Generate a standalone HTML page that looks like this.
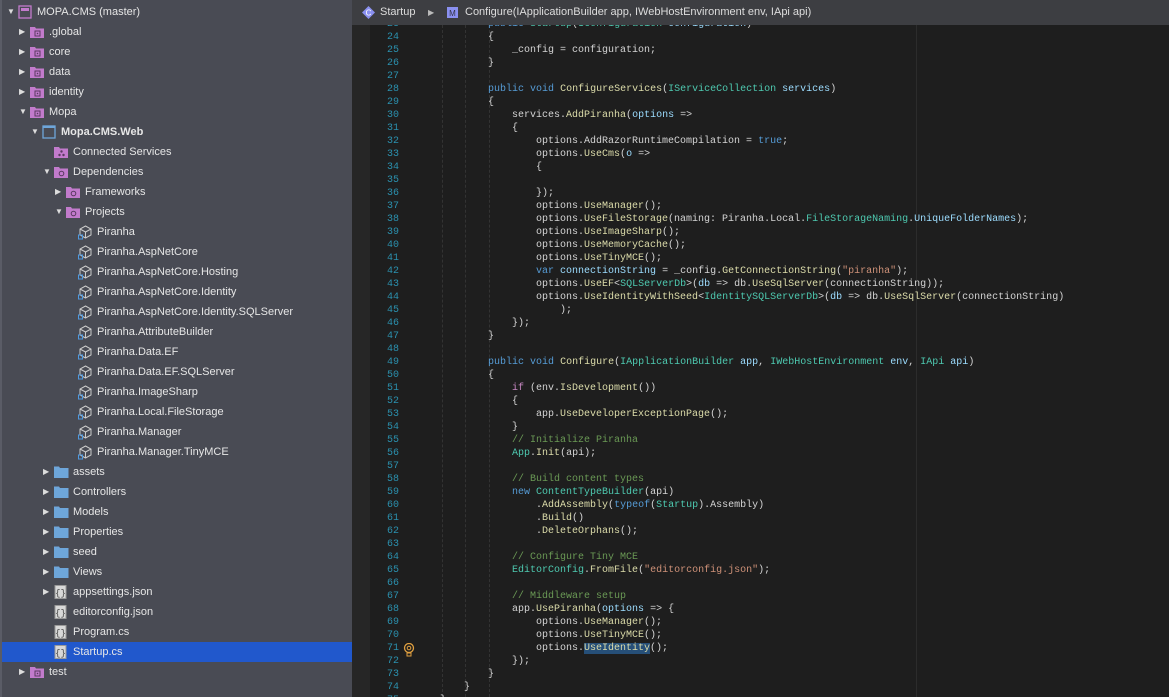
<!DOCTYPE html>
<html><head><meta charset="utf-8"><style>
*{margin:0;padding:0;box-sizing:border-box}
body{width:1169px;height:697px;overflow:hidden;background:#1e1e1e;position:relative;font-family:"Liberation Sans",sans-serif}
#side{position:absolute;left:0;top:0;width:352px;height:697px;background:#494b54;border-left:2px solid #5a5c66}
.row{position:absolute;left:0;width:352px;height:20px;color:#e6e6e6;font-size:11px;line-height:20px}
.row .t{position:absolute;top:0;white-space:nowrap}
.arr{position:absolute;top:0;font-size:8px;color:#ddd}
.ic{position:absolute;top:3px}
.sel{background:#2158cc}
#gut{position:absolute;left:352px;top:0;width:18px;height:697px;background:#262626}
#hdr{position:absolute;left:352px;top:0;width:817px;height:25px;background:#3d3e42;color:#ddd;font-size:11px;line-height:25px;z-index:3}
#code{position:absolute;left:370px;top:0;width:799px;height:697px;overflow:hidden}
.ln{position:absolute;left:0;width:29px;text-align:right;color:#2b91af;font:10px/13px "Liberation Mono",monospace}
.cl{position:absolute;left:70px;white-space:pre;color:#d4d4d4;font:10px/13px "Liberation Mono",monospace}
.k{color:#569cd6}.m{color:#dcdcaa}.y{color:#4ec9b0}.p{color:#9cdcfe}.s{color:#ce9178}.c{color:#6a9955}.f{color:#c586c0}
.g{position:absolute;top:0;height:697px;border-left:1px dashed #333}
</style></head><body>
<div id="side"></div>
<div id="gut"></div>
<div id="hdr">
<svg style="position:absolute;left:10px;top:6px" width="13" height="13"><path d="M6.5 0L13 6.5 6.5 13 0 6.5Z" fill="#8a90f0"/><text x="6.5" y="9.5" font-size="8" text-anchor="middle" fill="#fff" font-family="Liberation Sans">C</text></svg>
<span style="position:absolute;left:28px">Startup</span>
<span style="position:absolute;left:76px;font-size:8px;color:#bbb">▶</span>
<svg style="position:absolute;left:95px;top:7px" width="11" height="11"><rect width="11" height="11" fill="#8a90f0"/><text x="5.5" y="9" font-size="8" text-anchor="middle" fill="#334" font-family="Liberation Sans">M</text></svg>
<span style="position:absolute;left:113px">Configure(IApplicationBuilder app, IWebHostEnvironment env, IApi api)</span>
</div>
<div id="code">
<div class="g" style="left:72px"></div><div class="g" style="left:95px"></div><div class="g" style="left:119px"></div>
<div style="position:absolute;left:546px;top:0;width:1px;height:697px;background:#2c2c2c"></div>
<div id="lines"></div>
</div>
<script>
const L=[
[23,'        <span class="k">public</span> <span class="y">Startup</span>(<span class="y">IConfiguration</span> <span class="p">configuration</span>)'],
[24,'        {'],[25,'            _config = configuration;'],[26,'        }'],[27,''],
[28,'        <span class="k">public</span> <span class="k">void</span> <span class="m">ConfigureServices</span>(<span class="y">IServiceCollection</span> <span class="p">services</span>)'],
[29,'        {'],[30,'            services.<span class="m">AddPiranha</span>(<span class="p">options</span> =>'],[31,'            {'],
[32,'                options.AddRazorRuntimeCompilation = <span class="k">true</span>;'],
[33,'                options.<span class="m">UseCms</span>(<span class="p">o</span> =>'],[34,'                {'],[35,''],[36,'                });'],
[37,'                options.<span class="m">UseManager</span>();'],
[38,'                options.<span class="m">UseFileStorage</span>(naming: Piranha.Local.<span class="y">FileStorageNaming</span>.<span class="p">UniqueFolderNames</span>);'],
[39,'                options.<span class="m">UseImageSharp</span>();'],[40,'                options.<span class="m">UseMemoryCache</span>();'],[41,'                options.<span class="m">UseTinyMCE</span>();'],
[42,'                <span class="k">var</span> <span class="p">connectionString</span> = _config.<span class="m">GetConnectionString</span>(<span class="s">"piranha"</span>);'],
[43,'                options.<span class="m">UseEF</span>&lt;<span class="y">SQLServerDb</span>&gt;(<span class="p">db</span> => db.<span class="m">UseSqlServer</span>(connectionString));'],
[44,'                options.<span class="m">UseIdentityWithSeed</span>&lt;<span class="y">IdentitySQLServerDb</span>&gt;(<span class="p">db</span> => db.<span class="m">UseSqlServer</span>(connectionString)'],
[45,'                    );'],[46,'            });'],[47,'        }'],[48,''],
[49,'        <span class="k">public</span> <span class="k">void</span> <span class="m">Configure</span>(<span class="y">IApplicationBuilder</span> <span class="p">app</span>, <span class="y">IWebHostEnvironment</span> <span class="p">env</span>, <span class="y">IApi</span> <span class="p">api</span>)'],
[50,'        {'],[51,'            <span class="f">if</span> (env.<span class="m">IsDevelopment</span>())'],[52,'            {'],
[53,'                app.<span class="m">UseDeveloperExceptionPage</span>();'],[54,'            }'],
[55,'            <span class="c">// Initialize Piranha</span>'],[56,'            <span class="y">App</span>.<span class="m">Init</span>(api);'],[57,''],
[58,'            <span class="c">// Build content types</span>'],[59,'            <span class="k">new</span> <span class="y">ContentTypeBuilder</span>(api)'],
[60,'                .<span class="m">AddAssembly</span>(<span class="k">typeof</span>(<span class="y">Startup</span>).Assembly)'],[61,'                .<span class="m">Build</span>()'],[62,'                .<span class="m">DeleteOrphans</span>();'],[63,''],
[64,'            <span class="c">// Configure Tiny MCE</span>'],[65,'            <span class="y">EditorConfig</span>.<span class="m">FromFile</span>(<span class="s">"editorconfig.json"</span>);'],[66,''],
[67,'            <span class="c">// Middleware setup</span>'],[68,'            app.<span class="m">UsePiranha</span>(<span class="p">options</span> => {'],
[69,'                options.<span class="m">UseManager</span>();'],[70,'                options.<span class="m">UseTinyMCE</span>();'],
[71,'                options.<span class="m" style="background:#264f78">UseIdentity</span>();'],[72,'            });'],[73,'        }'],[74,'    }'],[75,'}']];
let h='';for(const [n,c] of L){const y=31+(n-24)*13;h+=`<div class="ln" style="top:${y}px">${n}</div><div class="cl" style="top:${y}px">${c}</div>`;}
h+='<svg style="position:absolute;left:33px;top:643px" width="12" height="14"><circle cx="6" cy="5" r="4.5" fill="none" stroke="#e0a040" stroke-width="1.3"/><circle cx="6" cy="5" r="1.8" fill="none" stroke="#e0a040"/><rect x="4" y="10" width="4" height="3" fill="none" stroke="#e0a040"/></svg>';
document.getElementById('lines').innerHTML=h;
const pf='<svg class="ic" width="15" height="14"><path d="M0 2h5l1 1.5h8V13H0z" fill="#c27bcc"/><rect x="5" y="6" width="5" height="5" fill="none" stroke="#5a3a60"/><rect x="6.8" y="7.8" width="1.4" height="1.4" fill="#5a3a60"/></svg>';
const pd='<svg class="ic" width="15" height="14"><path d="M0 2h5l1 1.5h8V13H0z" fill="#c27bcc"/><circle cx="7.5" cy="8.5" r="2.3" fill="none" stroke="#5a3a60"/></svg>';
const pc='<svg class="ic" width="15" height="14"><path d="M0 2h5l1 1.5h8V13H0z" fill="#c27bcc"/><circle cx="7.5" cy="6.5" r="1.2" fill="#5a3a60"/><circle cx="5.5" cy="10" r="1.2" fill="#5a3a60"/><circle cx="9.5" cy="10" r="1.2" fill="#5a3a60"/></svg>';
const bf='<svg class="ic" width="15" height="14"><path d="M0 1.5h5l1 1.5h8.5V13H0z" fill="#6ea6da"/></svg>';
const js='<svg class="ic" width="13" height="14"><rect x="1" y="0.5" width="11" height="13" fill="#d8d8d8" stroke="#999"/><text x="6.5" y="10.5" font-size="9" text-anchor="middle" fill="#444" font-family="Liberation Mono">{}</text></svg>';
const pr='<svg class="ic" width="15" height="15"><path d="M7.5 1L13 4v6l-5.5 3L2 10V4z M2 4l5.5 3L13 4 M7.5 7v6" fill="none" stroke="#ccc"/><rect x="0.5" y="10" width="4" height="4" fill="none" stroke="#4f9ae0"/></svg>';
const root='<svg class="ic" width="15" height="15"><rect x="1" y="1" width="12" height="12" fill="none" stroke="#c27bcc" stroke-width="1.3"/><rect x="3" y="3" width="8" height="3" fill="#c27bcc"/></svg>';
const web='<svg class="ic" width="15" height="15"><rect x="1" y="1" width="12" height="12" fill="none" stroke="#6ea6da" stroke-width="1.3"/><rect x="1" y="1" width="12" height="2" fill="#6ea6da"/></svg>';
const T=[[0,1,root,'MOPA.CMS (master)'],[1,0,pf,'.global'],[1,0,pf,'core'],[1,0,pf,'data'],[1,0,pf,'identity'],[1,1,pf,'Mopa'],[2,1,web,'<b>Mopa.CMS.Web</b>'],[3,-1,pc,'Connected Services'],[3,1,pd,'Dependencies'],[4,0,pd,'Frameworks'],[4,1,pd,'Projects'],
...['Piranha','Piranha.AspNetCore','Piranha.AspNetCore.Hosting','Piranha.AspNetCore.Identity','Piranha.AspNetCore.Identity.SQLServer','Piranha.AttributeBuilder','Piranha.Data.EF','Piranha.Data.EF.SQLServer','Piranha.ImageSharp','Piranha.Local.FileStorage','Piranha.Manager','Piranha.Manager.TinyMCE'].map(s=>[5,-1,pr,s]),
...['assets','Controllers','Models','Properties','seed','Views'].map(s=>[3,0,bf,s]),[3,0,js,'appsettings.json'],[3,-1,js,'editorconfig.json'],[3,-1,js,'Program.cs'],[3,-1,js,'Startup.cs'],[1,0,pf,'test']];
let s='';T.forEach((r,i)=>{const [lv,a,ic,t]=r;const tx=35+12*lv;s+=`<div class="row${i==32?' sel':''}" style="top:${2+20*i}px">${a>=0?`<span class="arr" style="left:${tx-30}px">${a?'▼':'▶'}</span>`:''}<span style="position:absolute;left:${tx-19}px;top:0">${ic}</span><span class="t" style="left:${tx}px">${t}</span></div>`});
document.getElementById('side').innerHTML=s;
</script>
</body></html>
